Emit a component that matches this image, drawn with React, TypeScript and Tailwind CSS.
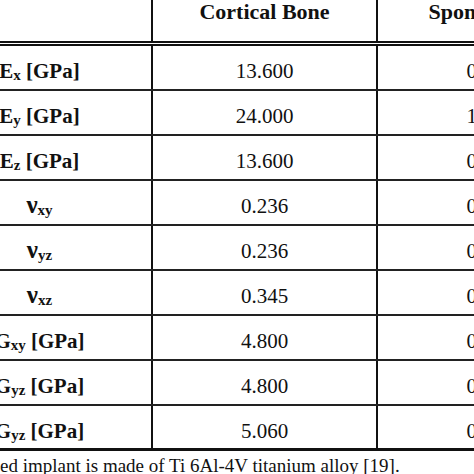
const rows = [
  { sym: 'E', sub: 'x', unit: true, cortical: '13.600', spongy: '0.910' },
  { sym: 'E', sub: 'y', unit: true, cortical: '24.000', spongy: '1.370' },
  { sym: 'E', sub: 'z', unit: true, cortical: '13.600', spongy: '0.910' },
  { sym: 'ν', sub: 'xy', unit: false, cortical: '0.236', spongy: '0.300' },
  { sym: 'ν', sub: 'yz', unit: false, cortical: '0.236', spongy: '0.300' },
  { sym: 'ν', sub: 'xz', unit: false, cortical: '0.345', spongy: '0.300' },
  { sym: 'G', sub: 'xy', unit: true, cortical: '4.800', spongy: '0.280' },
  { sym: 'G', sub: 'yz', unit: true, cortical: '4.800', spongy: '0.280' },
  { sym: 'G', sub: 'yz', unit: true, cortical: '5.060', spongy: '0.280' },
]

export default function App() {
  return (
    <div className="w-[474px] h-[474px] overflow-hidden bg-white text-[#111] font-['Liberation_Serif',serif]">
      <div className="ml-[-72px] w-[674px]">
        {/* Header */}
        <div className="grid grid-cols-[225px_225px_224px] h-[46px] border-b-[5px] border-double border-[#111] text-[22px] font-bold leading-none text-center">
          <div className="border-r-2 border-[#111]"></div>
          <div className="border-r-2 border-[#111] pt-[1px]">Cortical Bone</div>
          <div className="pt-[1px]">Spongy Bone</div>
        </div>

        {/* Body */}
        {rows.map((row, i) => (
          <div
            key={i}
            className={
              i === rows.length - 1
                ? 'grid grid-cols-[225px_225px_224px] h-[45px] border-b-[3px] border-[#111] text-[21px] leading-normal text-center'
                : 'grid grid-cols-[225px_225px_224px] h-[45px] border-b-2 border-[#222] text-[21px] leading-normal text-center'
            }
          >
            <div className="border-r-2 border-[#111] pt-[10px] font-bold whitespace-nowrap">
              {row.unit ? (
                row.sym
              ) : (
                <span className="text-[25px] leading-none">{row.sym}</span>
              )}
              <span className="text-[15px] align-[-2px]">{row.sub}</span>
              {row.unit && ' [GPa]'}
            </div>
            <div className="border-r-2 border-[#111] pt-[10px]">{row.cortical}</div>
            <div className="pt-[10px]">{row.spongy}</div>
          </div>
        ))}
      </div>

      <p className="pt-[1px] text-[19px] leading-normal whitespace-nowrap">
        ed implant is made of Ti 6Al-4V titanium alloy [19].
      </p>
    </div>
  )
}
